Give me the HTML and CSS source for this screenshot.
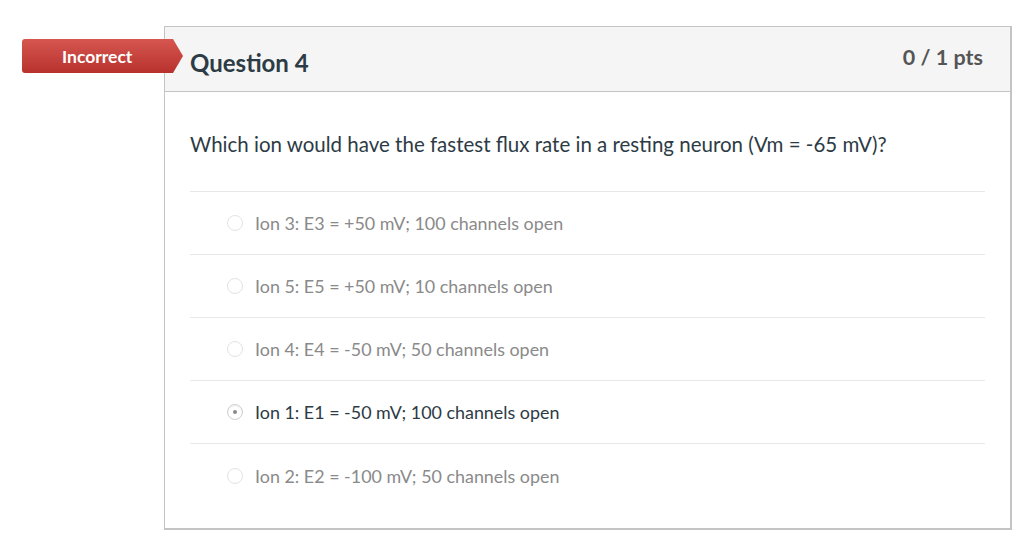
FILE: index.html
```html
<!DOCTYPE html>
<html>
<head>
<meta charset="utf-8">
<link rel="stylesheet" href="styles.css">
</head>
<body>
<div class="page">
  <div class="badge">Incorrect</div>
  <div class="card">
    <div class="header">
      <h2 class="title">Question 4</h2>
      <div class="pts">0 / 1 pts</div>
    </div>
    <div class="body">
      <p class="question">Which ion would have the fastest flux rate in a resting neuron (Vm = -65 mV)?</p>
      <ul class="answers">
        <li class="answer"><span class="radio"></span><span class="label">Ion 3: E3 = +50 mV; 100 channels open</span></li>
        <li class="answer"><span class="radio"></span><span class="label">Ion 5: E5 = +50 mV; 10 channels open</span></li>
        <li class="answer"><span class="radio"></span><span class="label">Ion 4: E4 = -50 mV; 50 channels open</span></li>
        <li class="answer selected"><span class="radio"></span><span class="label">Ion 1: E1 = -50 mV; 100 channels open</span></li>
        <li class="answer"><span class="radio"></span><span class="label">Ion 2: E2 = -100 mV; 50 channels open</span></li>
      </ul>
    </div>
  </div>
</div>
</body>
</html>
```

FILE: styles.css
```css
* { box-sizing: border-box; }
html, body { margin: 0; padding: 0; background: #fff; }
body { font-family: Lato, "Open Sans", sans-serif; color: #2d3b45; }
.page { position: relative; padding: 26px 12px 0 164px; }
.badge {
  position: absolute; left: 22px; top: 39px;
  width: 161px; height: 34px;
  background: linear-gradient(#d65650, #b8322d);
  clip-path: polygon(0 0, 151px 0, 161px 17px, 151px 34px, 0 34px);
  border-radius: 3px 0 0 3px;
  color: #fff; font-size: 17.5px; font-weight: 700;
  display: flex; align-items: center; padding-left: 40px;
  z-index: 2;
}
.card {
  width: 848px; height: 504px;
  border: 1px solid #c4c4c4; border-right-width: 2px; border-bottom-width: 2px;
}
.header {
  height: 65px; background: #f5f5f5; border-bottom: 1px solid #c4c4c4;
  display: flex; justify-content: space-between; align-items: flex-start;
  padding: 0 27px 0 25px;
}
.title { margin: 0; padding-top: 21px; font-size: 24px; font-weight: 700; line-height: 30px; color: #2d3b45; }
.pts { padding-top: 17px; font-size: 21.5px; font-weight: 700; line-height: 26px; color: #555; }
.body { padding: 0 25px 0 25px; }
.question { margin: 0; padding-top: 38px; padding-bottom: 33px; font-size: 20.5px; line-height: 28px; border-bottom: 1px solid #e8e8e8; }
.answers { list-style: none; margin: 0; padding: 0; }
.answer {
  height: 63px; border-bottom: 1px solid #e8e8e8;
  display: flex; align-items: center; padding-left: 37px;
  font-size: 17.9px; color: #8a8a8a;
}
.answer:last-child { border-bottom: none; }
.radio {
  width: 16px; height: 16px; border-radius: 50%;
  border: 1px solid #e3e3e3; background: #fff; margin-right: 12px; flex: none;
  display: flex; align-items: center; justify-content: center;
}
.selected { color: #2d3b45; }
.selected .radio { border-color: #cfcfcf; box-shadow: inset 0 1px 2px rgba(0,0,0,0.08); }
.selected .radio::after { content: ""; width: 4px; height: 4px; border-radius: 50%; background: #8a8a8a; }
```
